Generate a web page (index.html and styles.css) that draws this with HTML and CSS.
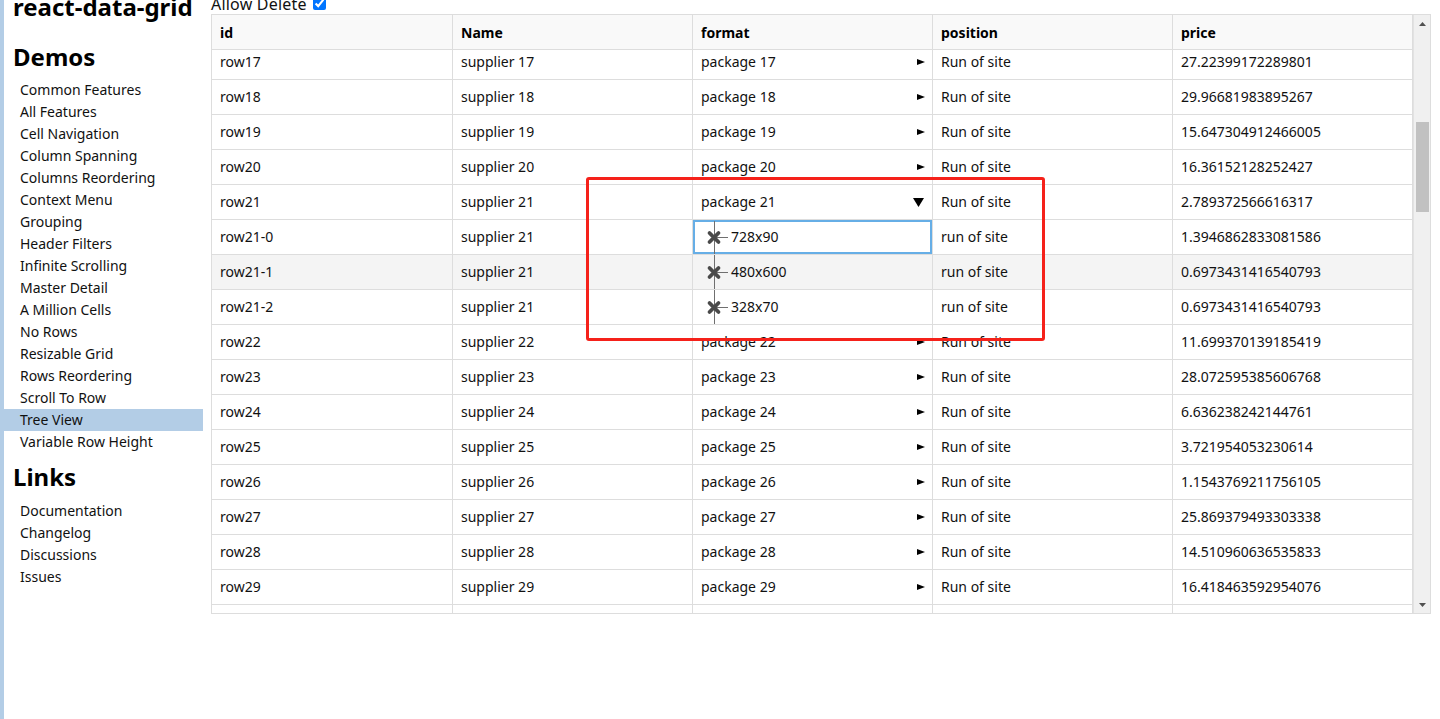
FILE: index.html
```html
<!DOCTYPE html>
<html lang="en">
<head>
<meta charset="utf-8">
<title>react-data-grid — Tree View</title>
<link rel="stylesheet" href="styles.css">
</head>
<body>
<nav class="nav">
  <h1 class="brand">react-data-grid</h1>
  <h2 class="nav-title">Demos</h2>
  <ul class="nav-list">
    <li>Common Features</li>
    <li>All Features</li>
    <li>Cell Navigation</li>
    <li>Column Spanning</li>
    <li>Columns Reordering</li>
    <li>Context Menu</li>
    <li>Grouping</li>
    <li>Header Filters</li>
    <li>Infinite Scrolling</li>
    <li>Master Detail</li>
    <li>A Million Cells</li>
    <li>No Rows</li>
    <li>Resizable Grid</li>
    <li>Rows Reordering</li>
    <li>Scroll To Row</li>
    <li class="active">Tree View</li>
    <li>Variable Row Height</li>
  </ul>
  <h2 class="nav-title links">Links</h2>
  <ul class="nav-list links-list">
    <li>Documentation</li>
    <li>Changelog</li>
    <li>Discussions</li>
    <li>Issues</li>
  </ul>
</nav>
<main class="main">
  <label class="toggle">Allow Delete<input class="check" type="checkbox" checked></label>
  <div class="grid">
    <div class="grid-main">
      <div class="hdr">
        <div class="c">id</div><div class="c">Name</div><div class="c">format</div><div class="c">position</div><div class="c">price</div>
      </div>
      <div class="gbody">
        <div class="rows">
          <div class="r"><div class="c">row17</div><div class="c">supplier 17</div><div class="c fmt">package 17<svg class="tri-r" width="8" height="6" viewBox="0 0 8 6"><polygon points="0,0 8,3 0,6"/></svg></div><div class="c">Run of site</div><div class="c">27.22399172289801</div></div>
          <div class="r"><div class="c">row18</div><div class="c">supplier 18</div><div class="c fmt">package 18<svg class="tri-r" width="8" height="6" viewBox="0 0 8 6"><polygon points="0,0 8,3 0,6"/></svg></div><div class="c">Run of site</div><div class="c">29.96681983895267</div></div>
          <div class="r"><div class="c">row19</div><div class="c">supplier 19</div><div class="c fmt">package 19<svg class="tri-r" width="8" height="6" viewBox="0 0 8 6"><polygon points="0,0 8,3 0,6"/></svg></div><div class="c">Run of site</div><div class="c">15.647304912466005</div></div>
          <div class="r"><div class="c">row20</div><div class="c">supplier 20</div><div class="c fmt">package 20<svg class="tri-r" width="8" height="6" viewBox="0 0 8 6"><polygon points="0,0 8,3 0,6"/></svg></div><div class="c">Run of site</div><div class="c">16.36152128252427</div></div>
          <div class="r"><div class="c">row21</div><div class="c">supplier 21</div><div class="c fmt">package 21<svg class="tri-d" width="11" height="9" viewBox="0 0 11 9"><polygon points="0,0 11,0 5.5,9"/></svg></div><div class="c">Run of site</div><div class="c">2.789372566616317</div></div>
          <div class="r"><div class="c">row21-0</div><div class="c">supplier 21</div><div class="c child selected"><span class="branch"><svg class="del" width="16" height="15" viewBox="0 0 16 15"><path d="M3.5 3 L12.5 12 M12.5 3 L3.5 12"/></svg></span>728x90</div><div class="c">run of site</div><div class="c">1.3946862833081586</div></div>
          <div class="r hover"><div class="c">row21-1</div><div class="c">supplier 21</div><div class="c child"><span class="branch"><svg class="del" width="16" height="15" viewBox="0 0 16 15"><path d="M3.5 3 L12.5 12 M12.5 3 L3.5 12"/></svg></span>480x600</div><div class="c">run of site</div><div class="c">0.6973431416540793</div></div>
          <div class="r"><div class="c">row21-2</div><div class="c">supplier 21</div><div class="c child"><span class="branch"><svg class="del" width="16" height="15" viewBox="0 0 16 15"><path d="M3.5 3 L12.5 12 M12.5 3 L3.5 12"/></svg></span>328x70</div><div class="c">run of site</div><div class="c">0.6973431416540793</div></div>
          <div class="r"><div class="c">row22</div><div class="c">supplier 22</div><div class="c fmt">package 22<svg class="tri-r" width="8" height="6" viewBox="0 0 8 6"><polygon points="0,0 8,3 0,6"/></svg></div><div class="c">Run of site</div><div class="c">11.699370139185419</div></div>
          <div class="r"><div class="c">row23</div><div class="c">supplier 23</div><div class="c fmt">package 23<svg class="tri-r" width="8" height="6" viewBox="0 0 8 6"><polygon points="0,0 8,3 0,6"/></svg></div><div class="c">Run of site</div><div class="c">28.072595385606768</div></div>
          <div class="r"><div class="c">row24</div><div class="c">supplier 24</div><div class="c fmt">package 24<svg class="tri-r" width="8" height="6" viewBox="0 0 8 6"><polygon points="0,0 8,3 0,6"/></svg></div><div class="c">Run of site</div><div class="c">6.636238242144761</div></div>
          <div class="r"><div class="c">row25</div><div class="c">supplier 25</div><div class="c fmt">package 25<svg class="tri-r" width="8" height="6" viewBox="0 0 8 6"><polygon points="0,0 8,3 0,6"/></svg></div><div class="c">Run of site</div><div class="c">3.721954053230614</div></div>
          <div class="r"><div class="c">row26</div><div class="c">supplier 26</div><div class="c fmt">package 26<svg class="tri-r" width="8" height="6" viewBox="0 0 8 6"><polygon points="0,0 8,3 0,6"/></svg></div><div class="c">Run of site</div><div class="c">1.1543769211756105</div></div>
          <div class="r"><div class="c">row27</div><div class="c">supplier 27</div><div class="c fmt">package 27<svg class="tri-r" width="8" height="6" viewBox="0 0 8 6"><polygon points="0,0 8,3 0,6"/></svg></div><div class="c">Run of site</div><div class="c">25.869379493303338</div></div>
          <div class="r"><div class="c">row28</div><div class="c">supplier 28</div><div class="c fmt">package 28<svg class="tri-r" width="8" height="6" viewBox="0 0 8 6"><polygon points="0,0 8,3 0,6"/></svg></div><div class="c">Run of site</div><div class="c">14.510960636535833</div></div>
          <div class="r"><div class="c">row29</div><div class="c">supplier 29</div><div class="c fmt">package 29<svg class="tri-r" width="8" height="6" viewBox="0 0 8 6"><polygon points="0,0 8,3 0,6"/></svg></div><div class="c">Run of site</div><div class="c">16.418463592954076</div></div>
          <div class="r"><div class="c">row30</div><div class="c">supplier 30</div><div class="c fmt">package 30<svg class="tri-r" width="8" height="6" viewBox="0 0 8 6"><polygon points="0,0 8,3 0,6"/></svg></div><div class="c">Run of site</div><div class="c">9.84120371925603</div></div>
        </div>
      </div>
    </div>
    <div class="sb">
      <svg class="sb-arrow" width="7" height="4" viewBox="0 0 7 4"><polygon points="0,4 7,4 3.5,0"/></svg>
      <div class="sb-track"><div class="sb-thumb"></div></div>
      <svg class="sb-arrow" width="7" height="4" viewBox="0 0 7 4"><polygon points="0,0 7,0 3.5,4"/></svg>
    </div>
  </div>
</main>
<div class="annotation"></div>
</body>
</html>
```
FILE: styles.css
```css
html, body {
  margin: 0;
  padding: 0;
}
body {
  position: relative;
  display: flex;
  min-height: 100vh;
  font-family: "Noto Sans", "Open Sans", sans-serif;
  color: #111;
  background: #fff;
  overflow: hidden;
}

/* sidebar */
.nav {
  width: 199px;
  flex-shrink: 0;
  border-left: 4px solid #b3cde6;
}
.brand {
  margin: -7px 0 0 9px;
  font-size: 24px;
  line-height: 28px;
  font-weight: 700;
  color: #000;
  white-space: nowrap;
}
.nav-title {
  margin: 21px 0 0 9px;
  font-size: 24px;
  line-height: 30px;
  font-weight: 700;
  color: #000;
}
.nav-title.links {
  margin-top: 9px;
}
.nav-list {
  list-style: none;
  margin: 7px 0 0;
  padding: 0;
}
.links-list {
  margin-top: 8px;
}
.nav-list li {
  padding-left: 16px;
  font-size: 14px;
  line-height: 22px;
  white-space: nowrap;
}
.nav-list li.active {
  background: #b3cde6;
}

/* main */
.main {
  padding-left: 8px;
}
.toggle {
  display: block;
  margin-top: -5px;
  height: 19px;
  font-size: 16px;
  line-height: 18px;
  letter-spacing: 0.2px;
}
.check {
  margin: 0 0 0 6px;
  width: 13px;
  height: 13px;
  vertical-align: baseline;
}

/* grid */
.grid {
  display: flex;
  width: 1220px;
  height: 600px;
  box-sizing: border-box;
  border: 1px solid #ddd;
  font-size: 14px;
  color: #111;
}
.grid-main {
  width: 1201px;
  display: flex;
  flex-direction: column;
}
.hdr {
  display: flex;
  height: 35px;
  flex-shrink: 0;
  background: #f9f9f9;
  font-weight: 700;
  color: #000;
}
.gbody {
  flex: 1;
  overflow: hidden;
}
.rows {
  margin-top: -5px;
}
.r {
  display: flex;
  height: 35px;
  background: #fff;
}
.r.hover {
  background: #f4f4f4;
}
.c {
  width: 240px;
  height: 35px;
  box-sizing: border-box;
  border-right: 1px solid #ddd;
  border-bottom: 1px solid #ddd;
  padding: 0 8px;
  line-height: 34px;
  white-space: nowrap;
  overflow: hidden;
}
.c:first-child {
  width: 241px;
}
.hdr .c {
  line-height: 35px;
}
.fmt {
  display: flex;
  align-items: center;
  justify-content: space-between;
  padding-right: 7px;
}
.tri-r {
  fill: #000;
}
.tri-d {
  fill: #000;
  margin-right: 1px;
}
.child {
  display: flex;
  align-items: center;
  padding-left: 13px;
}
.child.selected {
  box-shadow: inset 0 0 0 2px #66aee6;
}
.branch {
  display: flex;
  align-items: center;
  align-self: stretch;
  width: 25px;
  flex-shrink: 0;
  background:
    linear-gradient(#6f6f6f, #6f6f6f) 8px 0 / 1px 100% no-repeat,
    linear-gradient(#6f6f6f, #6f6f6f) 8px 50% / 14px 1px no-repeat;
}
.selected .branch {
  background:
    linear-gradient(#6f6f6f, #6f6f6f) 8px 1px / 1px 100% no-repeat,
    linear-gradient(#6f6f6f, #6f6f6f) 8px 50% / 14px 1px no-repeat;
}
.del {
  margin-top: 1px;
}
.del path {
  stroke: #4a4a4a;
  stroke-width: 3.8;
  stroke-linecap: round;
  fill: none;
}

/* scrollbar */
.sb {
  width: 17px;
  flex-shrink: 0;
  box-sizing: border-box;
  background: #f0f0f0;
  border-left: 1px solid #e2e2e2;
  display: flex;
  flex-direction: column;
  align-items: center;
}
.sb-arrow {
  fill: #505050;
  margin: 7px 0 6px;
}
.sb-track {
  flex: 1;
  width: 100%;
}
.sb-thumb {
  margin: 90px 0 0 2px;
  width: 13px;
  height: 90px;
  background: #c1c1c1;
}

/* red annotation drawn over the screenshot */
.annotation {
  position: absolute;
  left: 586px;
  top: 177px;
  width: 459px;
  height: 164px;
  box-sizing: border-box;
  border: 3px solid #f5211a;
  border-radius: 3px;
  pointer-events: none;
}
```
